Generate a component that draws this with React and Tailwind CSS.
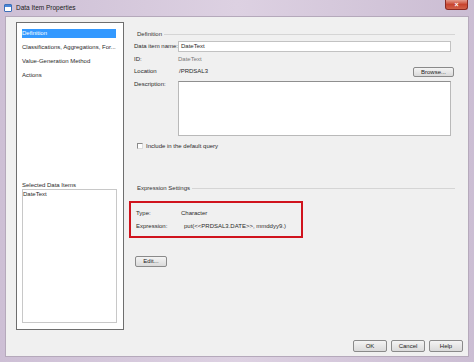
import React from 'react'

const font = { fontFamily: '"Liberation Sans", Arial, sans-serif' }

function Btn({ children, className = '' }) {
  return (
    <div
      className={`flex items-center justify-center rounded-[2px] border border-[#8a8a8a] bg-gradient-to-b from-[#f4f4f4] to-[#dadada] text-[6px] text-[#222] ${className}`}
    >
      {children}
    </div>
  )
}

function GroupHeader({ label }) {
  return (
    <div className="flex h-[10px] items-center pl-[8px]">
      <span className="text-[6px] text-[#333]">{label}</span>
      <div className="ml-[2px] h-px flex-1 bg-[#d5d5d5]" />
    </div>
  )
}

export default function App() {
  return (
    <div
      className="flex h-[362px] w-[474px] flex-col bg-gradient-to-r from-[#cdbfd5] via-[#ddd1e2] to-[#cbbdd3]"
      style={font}
    >
      {/* Title bar */}
      <div className="relative flex h-[16px] items-center pl-[4px]">
        <div className="flex h-[8px] w-[8px] flex-col rounded-[1px] border border-[#3d6fb8] bg-white">
          <div className="h-[2px] bg-[#4a86d8]" />
        </div>
        <span className="ml-[4px] text-[6.5px] text-[#1a1a1a]">Data Item Properties</span>
        <div className="absolute right-[6px] top-0 flex h-[10px] w-[23px] items-center justify-center rounded-b-[3px] border border-t-0 border-[#8a2a22] bg-gradient-to-b from-[#e39a8c] via-[#c8442f] to-[#d1614a]">
          <span className="text-[7px] font-bold leading-none text-white">×</span>
        </div>
      </div>

      {/* Client area */}
      <div className="mx-[5px] mb-[5px] flex flex-1 flex-col border border-[#b5a9bb] bg-[#f0f0f0] pl-[10px] pr-[5px] pt-[5px] pb-[4px]">
        <div className="flex">
          {/* Left list */}
          <div className="flex h-[308px] w-[108px] flex-col border border-[#6e6e6e] bg-white text-[6px] text-[#2a2a2a]">
            <div className="ml-[5px] mr-[7px] mt-[6px] flex h-[9px] items-center bg-[#3399ff] text-white">
              Definition
            </div>
            <div className="ml-[5px] mt-[5px] flex h-[9px] items-center whitespace-nowrap">
              Classifications, Aggregations, For...
            </div>
            <div className="ml-[5px] mt-[5px] flex h-[9px] items-center">Value-Generation Method</div>
            <div className="ml-[5px] mt-[5px] flex h-[9px] items-center">Actions</div>
            <div className="ml-[5px] mt-[101px] flex h-[8px] items-center">Selected Data Items</div>
            <div className="ml-[5px] mr-[6px] flex h-[134px] flex-col border border-[#c8c8c8]">
              <span className="leading-[8px]">DateText</span>
            </div>
          </div>

          {/* Right content */}
          <div className="ml-[5px] flex w-[326px] flex-col text-[6px] text-[#2a2a2a]">
            <div className="mt-[7px]">
              <GroupHeader label="Definition" />
            </div>

            <div className="mt-[2px] flex h-[11px] items-center pl-[5px]">
              <span className="w-[44px] whitespace-nowrap">Data item name:</span>
              <div className="flex h-[11px] w-[273px] items-center border border-[#c2c2c2] bg-white pl-[2px]">
                DateText
              </div>
            </div>

            <div className="mt-[3px] flex h-[8px] items-center pl-[5px]">
              <span className="w-[44px]">ID:</span>
              <span className="text-[#7a7a7a]">DateText</span>
            </div>

            <div className="mt-[3px] flex h-[11px] items-center pl-[5px]">
              <span className="w-[45px]">Location</span>
              <span className="flex-1">/PRDSAL3</span>
              <Btn className="mr-px mt-[1px] h-[10px] w-[41px]">Browse...</Btn>
            </div>

            <div className="mt-[4px] flex pl-[5px]">
              <span className="w-[44px] leading-[7px]">Description:</span>
              <div className="h-[55px] w-[273px] border border-[#b9b9b9] border-t-[#8f8f8f] bg-white" />
            </div>

            <div className="mt-[5px] flex h-[10px] items-center pl-[8px]">
              <div className="h-[6px] w-[6px] border border-[#8a8a8a] border-b-[#dcdcdc] border-r-[#dcdcdc] bg-white" />
              <span className="ml-[3px]">Include in the default query</span>
            </div>

            <div className="mt-[32px]">
              <GroupHeader label="Expression Settings" />
            </div>

            <div className="mt-[8px] flex h-[37px] w-[174px] flex-col justify-center gap-[5px] border-2 border-[#d0131d] pl-[5px]">
              <div className="flex h-[8px] items-center">
                <span className="w-[45px]">Type:</span>
                <span>Character</span>
              </div>
              <div className="flex h-[8px] items-center">
                <span className="w-[48px]">Expression:</span>
                <span className="whitespace-nowrap">put(&lt;&lt;PRDSAL3.DATE&gt;&gt;, mmddyy9.)</span>
              </div>
            </div>

            <Btn className="ml-[6px] mt-[18px] h-[11px] w-[32px]">Edit...</Btn>
          </div>
        </div>

        {/* Bottom buttons */}
        <div className="mt-auto flex justify-end gap-[4px]">
          <Btn className="h-[12px] w-[34px]">OK</Btn>
          <Btn className="h-[12px] w-[34px]">Cancel</Btn>
          <Btn className="h-[12px] w-[34px]">Help</Btn>
        </div>
      </div>
    </div>
  )
}
